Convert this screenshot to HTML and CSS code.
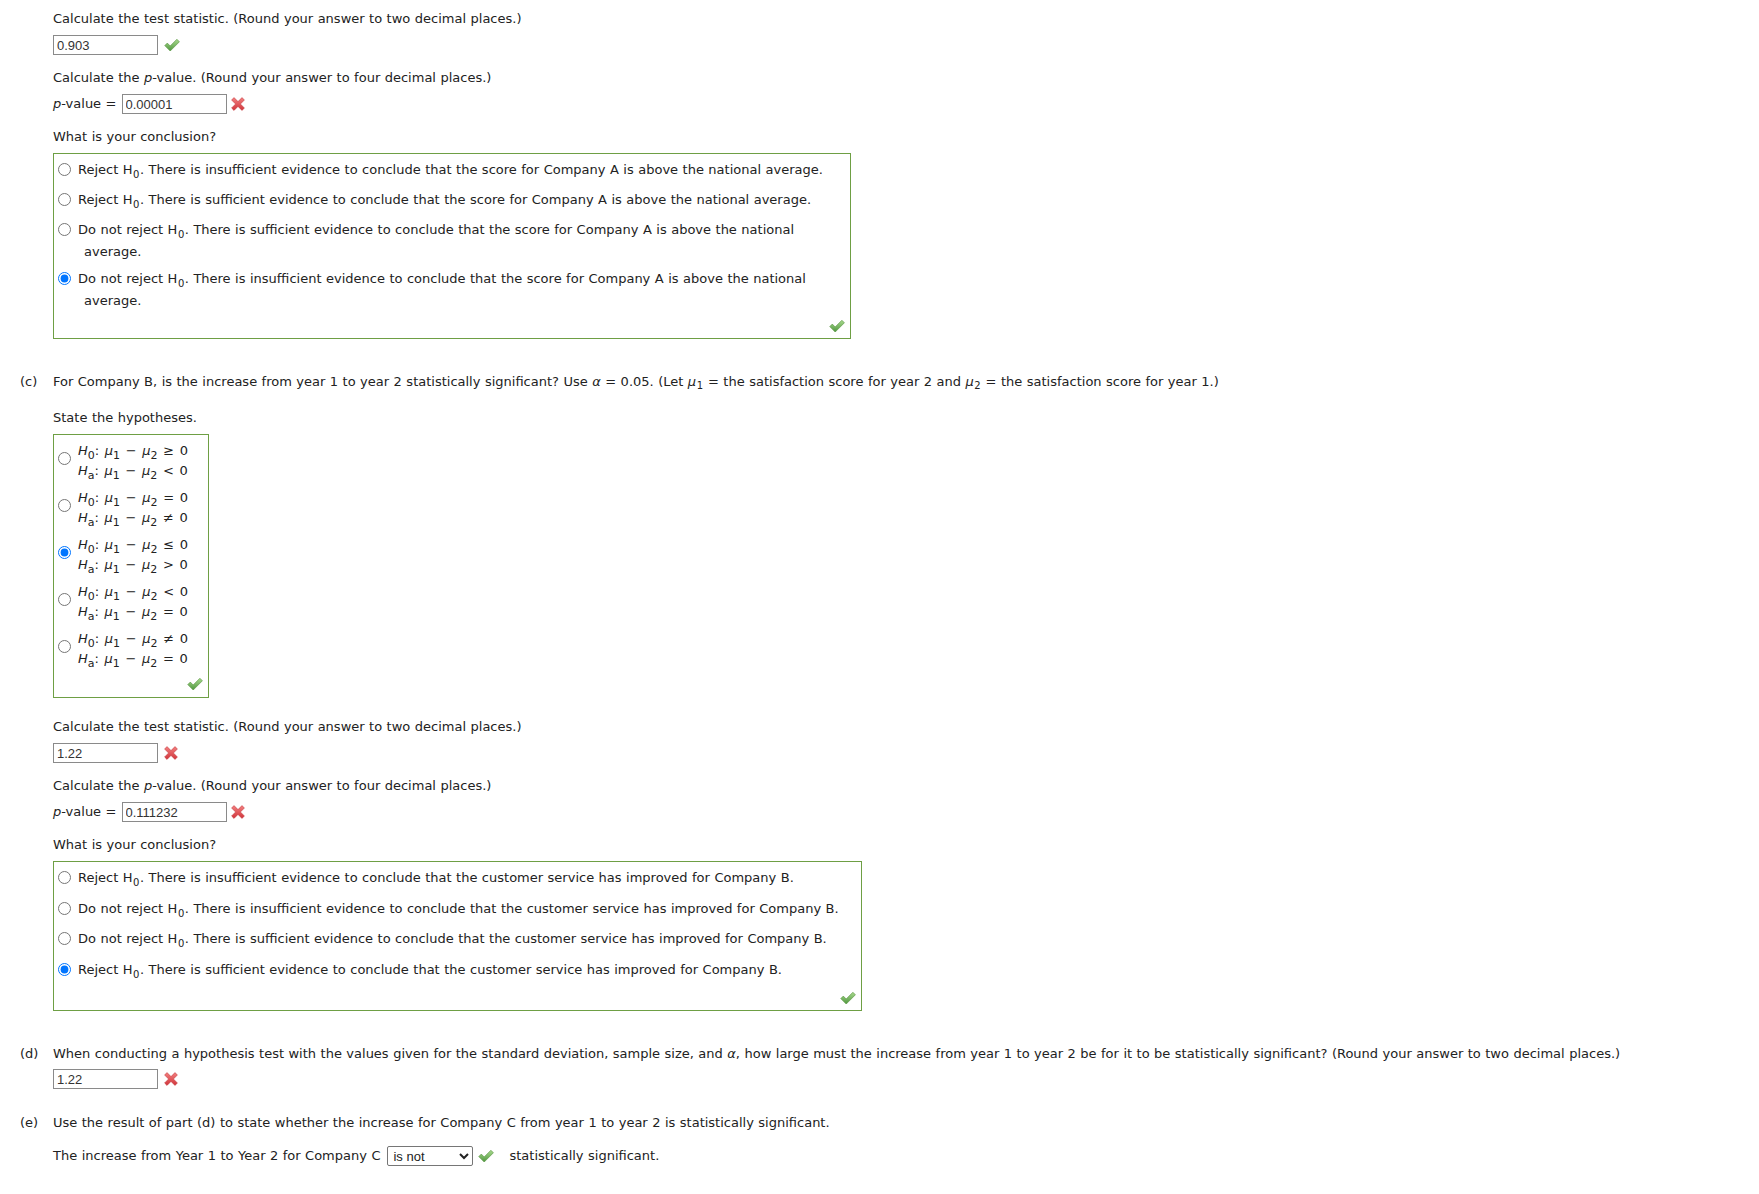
FILE: index.html
```html
<!DOCTYPE html>
<html lang="en">
<head>
<meta charset="utf-8">
<title>Hypothesis test</title>
<link rel="stylesheet" href="styles.css">
</head>
<body>
<svg class="sprite" aria-hidden="true">
  <defs>
    <linearGradient id="gOk" x1="0" y1="0" x2="0" y2="1">
      <stop offset="0" stop-color="#a9da8e"/>
      <stop offset="1" stop-color="#4f973e"/>
    </linearGradient>
    <linearGradient id="gBad" x1="0" y1="0" x2="0" y2="1">
      <stop offset="0" stop-color="#f38080"/>
      <stop offset="1" stop-color="#d0343a"/>
    </linearGradient>
    <symbol id="ok" viewBox="0 0 16 14">
      <path d="M0.8 7.6 L3.3 5.1 L6.2 8 L12.9 1.3 L15.4 3.8 L6.2 13 Z" fill="url(#gOk)" stroke="#5f9a48" stroke-width="0.7" stroke-linejoin="round"/>
    </symbol>
    <symbol id="bad" viewBox="0 0 14 14">
      <path d="M3 0.6 L7 4.6 L11 0.6 L13.4 3 L9.4 7 L13.4 11 L11 13.4 L7 9.4 L3 13.4 L0.6 11 L4.6 7 L0.6 3 Z" fill="url(#gBad)" stroke="#c63a40" stroke-width="0.6" stroke-linejoin="round"/>
    </symbol>
  </defs>
</svg>

<div class="page">

  <section class="part">
    <span class="part-label"></span>
    <div class="part-body">
      <p class="prompt prompt-first">Calculate the test statistic. (Round your answer to two decimal places.)</p>
      <div class="answer">
        <input class="field" type="text" value="0.903" readonly>
        <svg class="ic ic-ok"><use href="#ok"/></svg>
      </div>
      <p class="prompt">Calculate the <i>p</i>-value. (Round your answer to four decimal places.)</p>
      <div class="answer">
        <span class="answer-lead"><i>p</i>-value =</span>
        <input class="field" type="text" value="0.00001" readonly>
        <svg class="ic ic-bad ic-near"><use href="#bad"/></svg>
      </div>
      <p class="prompt">What is your conclusion?</p>
      <div class="choices choices-a">
        <label class="opt"><input class="radio" type="radio" name="concl-a"><span class="opt-text">Reject H<sub>0</sub>. There is insufficient evidence to conclude that the score for Company A is above the national average.</span></label>
        <label class="opt"><input class="radio" type="radio" name="concl-a"><span class="opt-text">Reject H<sub>0</sub>. There is sufficient evidence to conclude that the score for Company A is above the national average.</span></label>
        <label class="opt"><input class="radio" type="radio" name="concl-a"><span class="opt-text">Do not reject H<sub>0</sub>. There is sufficient evidence to conclude that the score for Company A is above the national<br>average.</span></label>
        <label class="opt"><input class="radio" type="radio" name="concl-a" checked><span class="opt-text">Do not reject H<sub>0</sub>. There is insufficient evidence to conclude that the score for Company A is above the national<br>average.</span></label>
        <div class="mark-row"><svg class="ic ic-ok"><use href="#ok"/></svg></div>
      </div>
    </div>
  </section>

  <section class="part">
    <span class="part-label">(c)</span>
    <div class="part-body">
      <p class="prompt prompt-first">For Company B, is the increase from year 1 to year 2 statistically significant? Use <i>α</i> = 0.05. (Let <i>μ</i><sub>1</sub> = the satisfaction score for year 2 and <i>μ</i><sub>2</sub> = the satisfaction score for year 1.)</p>
      <p class="prompt prompt-spaced">State the hypotheses.</p>
      <div class="choices hyp">
        <label class="opt hyp-opt"><input class="radio" type="radio" name="hyp"><span class="hyp-text"><span class="hyp-line"><i>H</i><sub>0</sub>: <i>μ</i><sub>1</sub> − <i>μ</i><sub>2</sub> ≥ 0</span><span class="hyp-line"><i>H</i><sub>a</sub>: <i>μ</i><sub>1</sub> − <i>μ</i><sub>2</sub> &lt; 0</span></span></label>
        <label class="opt hyp-opt"><input class="radio" type="radio" name="hyp"><span class="hyp-text"><span class="hyp-line"><i>H</i><sub>0</sub>: <i>μ</i><sub>1</sub> − <i>μ</i><sub>2</sub> = 0</span><span class="hyp-line"><i>H</i><sub>a</sub>: <i>μ</i><sub>1</sub> − <i>μ</i><sub>2</sub> ≠ 0</span></span></label>
        <label class="opt hyp-opt"><input class="radio" type="radio" name="hyp" checked><span class="hyp-text"><span class="hyp-line"><i>H</i><sub>0</sub>: <i>μ</i><sub>1</sub> − <i>μ</i><sub>2</sub> ≤ 0</span><span class="hyp-line"><i>H</i><sub>a</sub>: <i>μ</i><sub>1</sub> − <i>μ</i><sub>2</sub> &gt; 0</span></span></label>
        <label class="opt hyp-opt"><input class="radio" type="radio" name="hyp"><span class="hyp-text"><span class="hyp-line"><i>H</i><sub>0</sub>: <i>μ</i><sub>1</sub> − <i>μ</i><sub>2</sub> &lt; 0</span><span class="hyp-line"><i>H</i><sub>a</sub>: <i>μ</i><sub>1</sub> − <i>μ</i><sub>2</sub> = 0</span></span></label>
        <label class="opt hyp-opt"><input class="radio" type="radio" name="hyp"><span class="hyp-text"><span class="hyp-line"><i>H</i><sub>0</sub>: <i>μ</i><sub>1</sub> − <i>μ</i><sub>2</sub> ≠ 0</span><span class="hyp-line"><i>H</i><sub>a</sub>: <i>μ</i><sub>1</sub> − <i>μ</i><sub>2</sub> = 0</span></span></label>
        <div class="mark-row"><svg class="ic ic-ok"><use href="#ok"/></svg></div>
      </div>
      <p class="prompt">Calculate the test statistic. (Round your answer to two decimal places.)</p>
      <div class="answer">
        <input class="field" type="text" value="1.22" readonly>
        <svg class="ic ic-bad"><use href="#bad"/></svg>
      </div>
      <p class="prompt">Calculate the <i>p</i>-value. (Round your answer to four decimal places.)</p>
      <div class="answer">
        <span class="answer-lead"><i>p</i>-value =</span>
        <input class="field" type="text" value="0.111232" readonly>
        <svg class="ic ic-bad ic-near"><use href="#bad"/></svg>
      </div>
      <p class="prompt">What is your conclusion?</p>
      <div class="choices choices-c">
        <label class="opt"><input class="radio" type="radio" name="concl-c"><span class="opt-text">Reject H<sub>0</sub>. There is insufficient evidence to conclude that the customer service has improved for Company B.</span></label>
        <label class="opt"><input class="radio" type="radio" name="concl-c"><span class="opt-text">Do not reject H<sub>0</sub>. There is insufficient evidence to conclude that the customer service has improved for Company B.</span></label>
        <label class="opt"><input class="radio" type="radio" name="concl-c"><span class="opt-text">Do not reject H<sub>0</sub>. There is sufficient evidence to conclude that the customer service has improved for Company B.</span></label>
        <label class="opt"><input class="radio" type="radio" name="concl-c" checked><span class="opt-text">Reject H<sub>0</sub>. There is sufficient evidence to conclude that the customer service has improved for Company B.</span></label>
        <div class="mark-row mark-row-low"><svg class="ic ic-ok"><use href="#ok"/></svg></div>
      </div>
    </div>
  </section>

  <section class="part">
    <span class="part-label">(d)</span>
    <div class="part-body">
      <p class="prompt prompt-first">When conducting a hypothesis test with the values given for the standard deviation, sample size, and <i>α</i>, how large must the increase from year 1 to year 2 be for it to be statistically significant? (Round your answer to two decimal places.)</p>
      <div class="answer answer-tight">
        <input class="field" type="text" value="1.22" readonly>
        <svg class="ic ic-bad"><use href="#bad"/></svg>
      </div>
    </div>
  </section>

  <section class="part part-near">
    <span class="part-label">(e)</span>
    <div class="part-body">
      <p class="prompt prompt-first">Use the result of part (d) to state whether the increase for Company C from year 1 to year 2 is statistically significant.</p>
      <div class="answer answer-select">
        <span>The increase from Year 1 to Year 2 for Company C</span>
        <select class="sel"><option>is not</option><option>is</option></select>
        <svg class="ic ic-ok ic-tight"><use href="#ok"/></svg>
        <span class="tail">statistically significant.</span>
      </div>
    </div>
  </section>

</div>
</body>
</html>
```

FILE: styles.css
```css
html, body {
  margin: 0;
  background: #ffffff;
}

body {
  font-family: "DejaVu Sans", Verdana, sans-serif;
  font-size: 13px;
  line-height: 16px;
  word-spacing: 0.35px;
  color: #222222;
}

.sprite {
  display: block;
  width: 0;
  height: 0;
  overflow: hidden;
}

.page {
  padding: 11px 0 40px 20px;
}

.part {
  display: flex;
}

.part + .part {
  margin-top: 35px;
}

.part.part-near {
  margin-top: 26px;
}

.part-label {
  flex: 0 0 33px;
}

.part-body {
  flex: 1;
  min-width: 0;
}

.prompt {
  margin: 15px 0 0;
}

.prompt-first {
  margin-top: 0;
}

.prompt-spaced {
  margin-top: 19px;
}

.choices + .prompt {
  margin-top: 21px;
}

.answer {
  display: flex;
  align-items: center;
  height: 20px;
  margin-top: 8px;
}

.answer-tight {
  margin-top: 7px;
}

.answer-select {
  margin-top: 15px;
}

.answer-lead {
  margin-right: 5px;
}

.field {
  box-sizing: border-box;
  width: 105px;
  height: 20px;
  margin: 0;
  padding: 0 3px;
  border: 1px solid #8a8a8a;
  border-radius: 0;
  background: #ffffff;
  font: 13px "Liberation Sans", Arial, sans-serif;
  color: #333333;
  outline: none;
}

.ic {
  display: block;
  flex: none;
}

.ic-ok {
  width: 16px;
  height: 14px;
  margin-left: 6px;
}

.ic-bad {
  width: 14px;
  height: 14px;
  margin-left: 6px;
}

.ic-near {
  margin-left: 4px;
}

.ic-tight {
  margin-left: 5px;
}

.sel {
  box-sizing: border-box;
  width: 86px;
  height: 20px;
  margin: 0 0 0 7px;
  padding: 0 0 0 1px;
  border: 1px solid #767676;
  border-radius: 2px;
  background-color: #ffffff;
  font: 13px "Liberation Sans", Arial, sans-serif;
  color: #222222;
}

.tail {
  margin-left: 15px;
}

/* answer boxes with radio choices */
.choices {
  box-sizing: border-box;
  margin-top: 8px;
  padding: 6px 5px 4px 4px;
  border: 1px solid #6e9f44;
}

.choices-a {
  width: 798px;
}

.choices-c {
  width: 809px;
}

.opt {
  display: flex;
  align-items: flex-start;
  margin: 0 10px 8px 0;
  line-height: 19px;
}

.choices-c .opt {
  margin-bottom: 8.5px;
}

.radio {
  flex: none;
  width: 13px;
  height: 13px;
  margin: 3px 0 0 0;
}

.opt-text {
  padding-left: 13px;
  text-indent: -6px;
}

sub {
  margin: 0 0.5px;
  font-size: 10px;
  line-height: 14px;
  vertical-align: -4px;
}

.prompt sub {
  line-height: 10px;
  vertical-align: -3px;
}

.mark-row {
  display: flex;
  justify-content: flex-end;
  align-items: center;
  height: 16px;
  margin-top: 1px;
}

.mark-row-low {
  margin-top: 4px;
}

/* hypotheses box */
.hyp {
  width: 156px;
  padding: 6px 5px 5px 4px;
}

.hyp .mark-row {
  margin-top: 2px;
}

.hyp-opt {
  align-items: flex-start;
  margin: 0 0 7px 0;
}

.hyp-opt .radio {
  margin-top: 11px;
}

.hyp-text {
  padding-left: 7px;
  line-height: 20px;
  word-spacing: 1.5px;
}

.hyp-line {
  display: block;
}

.hyp sub {
  margin: 0;
  font-size: 11px;
  line-height: 10px;
}
```
